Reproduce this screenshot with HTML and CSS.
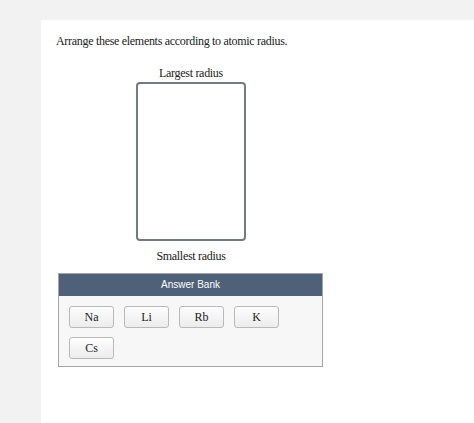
FILE: index.html
```html
<!DOCTYPE html>
<html>
<head>
<meta charset="utf-8">
<link rel="stylesheet" href="styles.css">
</head>
<body>
<div class="panel">
  <p class="prompt">Arrange these elements according to atomic radius.</p>
  <div class="ranking">
    <div class="label top">Largest radius</div>
    <div class="dropzone"></div>
    <div class="label bottom">Smallest radius</div>
  </div>
  <div class="bank">
    <div class="bank-head">Answer Bank</div>
    <div class="bank-body">
      <div class="chip">Na</div>
      <div class="chip">Li</div>
      <div class="chip">Rb</div>
      <div class="chip">K</div>
      <div class="chip">Cs</div>
    </div>
  </div>
</div>
</body>
</html>
```
FILE: styles.css
```css
html, body {
  margin: 0;
  padding: 0;
  height: 100%;
}
body {
  background: #f2f2f2;
  font-family: "Liberation Serif", "Times New Roman", serif;
  color: #222;
}
.panel {
  margin-left: 41px;
  margin-top: 20px;
  background: #fff;
  min-height: 403px;
  padding: 13px 0 0 15px;
  box-sizing: border-box;
}
.prompt {
  margin: 0;
  font-size: 12px;
  letter-spacing: -0.3px;
  line-height: 16px;
}
.ranking {
  width: 110px;
  margin-left: 80px;
  margin-top: 17px;
  display: flex;
  flex-direction: column;
  align-items: center;
}
.label {
  font-size: 12px;
  letter-spacing: -0.3px;
  line-height: 14px;
  white-space: nowrap;
}
.label.top {
  margin-bottom: 2px;
}
.label.bottom {
  margin-top: 8px;
}
.dropzone {
  width: 110px;
  height: 159px;
  box-sizing: border-box;
  border: 2px solid #737a84;
  border-radius: 4px;
  background: #fff;
}
.bank {
  margin-left: 2px;
  margin-top: 10px;
  width: 265px;
  border: 1px solid #a5a5a5;
  box-sizing: border-box;
  background: #f7f7f7;
}
.bank-head {
  background: #4e6178;
  color: #fff;
  height: 22px;
  line-height: 22px;
  text-align: center;
  font-family: "Liberation Sans", Arial, sans-serif;
  font-size: 10px;
}
.bank-body {
  display: flex;
  flex-wrap: wrap;
  gap: 9px 10px;
  padding: 10px 10px 7px 10px;
}
.chip {
  width: 45px;
  height: 22px;
  box-sizing: border-box;
  border: 1px solid #b9b9b9;
  border-radius: 3px;
  background: linear-gradient(#fdfdfd, #ececec);
  text-align: center;
  line-height: 20px;
  font-size: 12px;
  color: #222;
}
```
